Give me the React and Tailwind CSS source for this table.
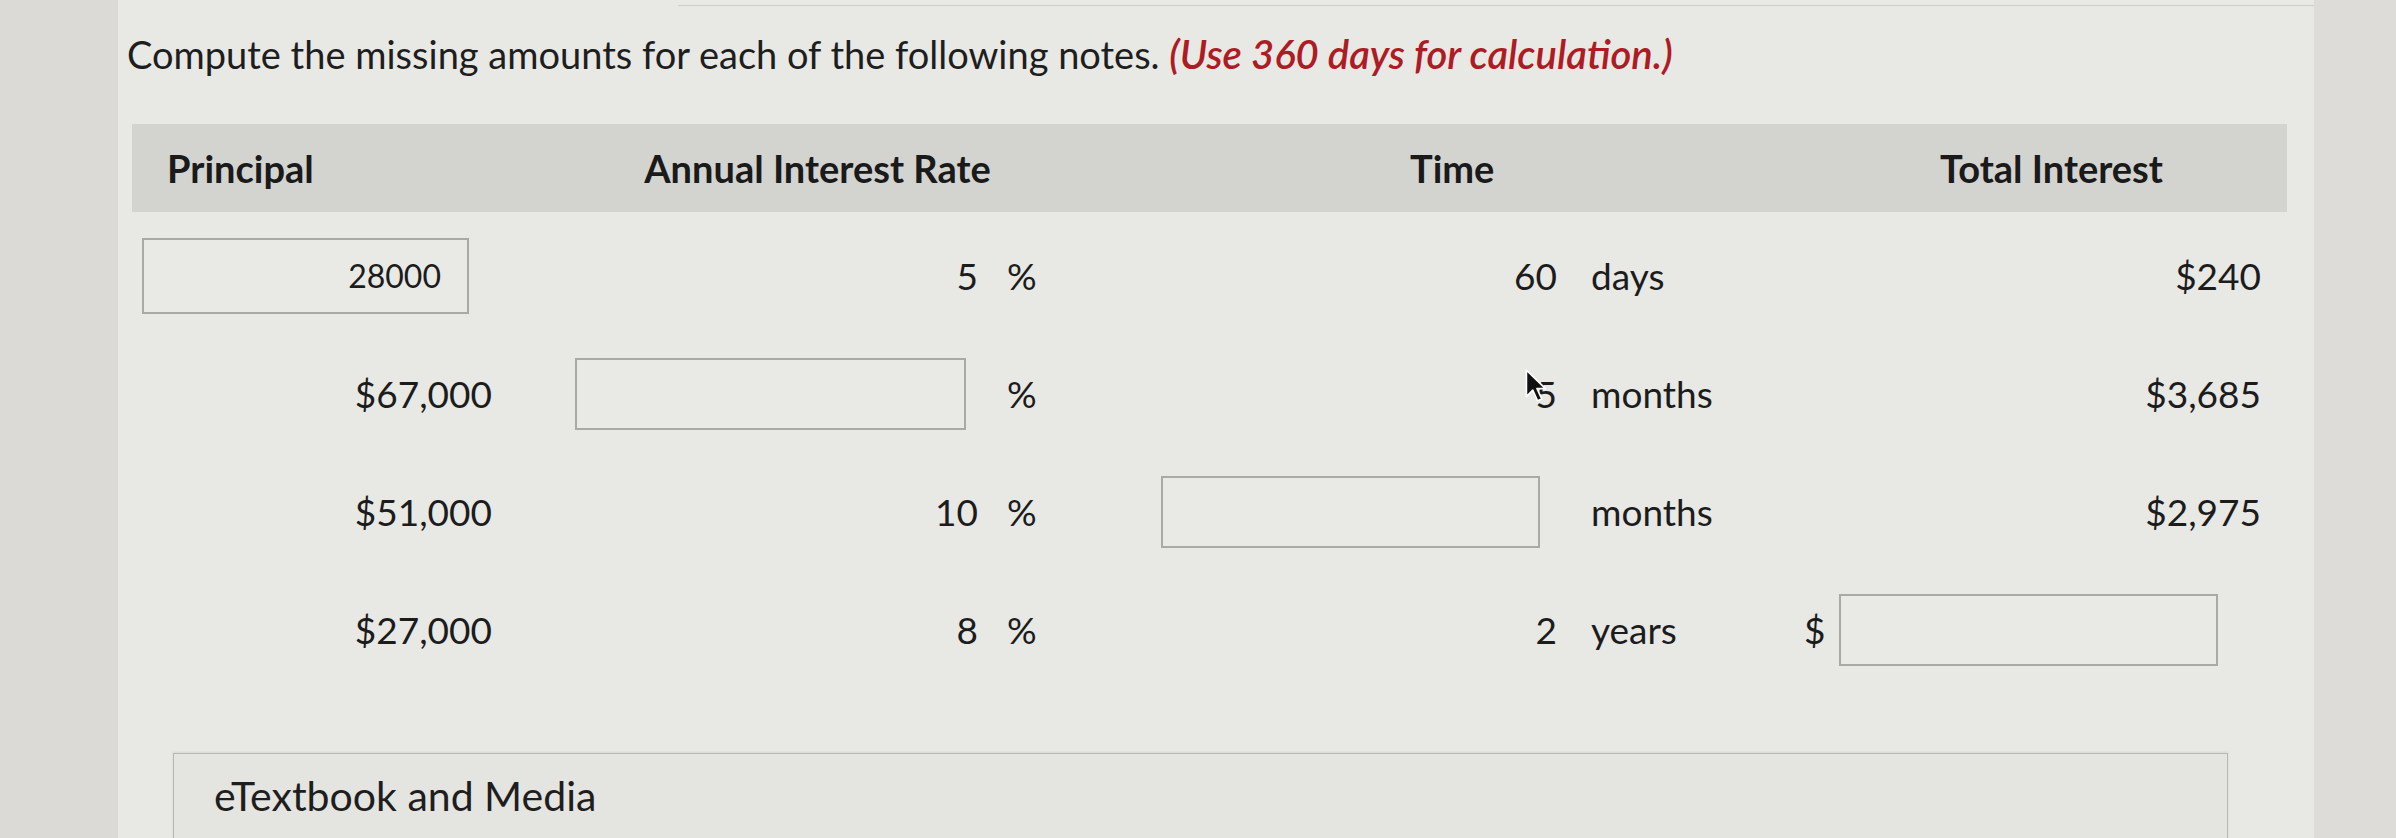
const rows = [
  { principal: "28000", principalInput: true, rate: "5", time: "60", unit: "days", interest: "$240" },
  { principal: "$67,000", rateInput: true, time: "5", unit: "months", interest: "$3,685", cursor: true },
  { principal: "$51,000", rate: "10", timeInput: true, unit: "months", interest: "$2,975" },
  { principal: "$27,000", rate: "8", time: "2", unit: "years", interestInput: true },
];

const boxClass = "h-[72px] border-2 border-[#a9a9a6] bg-[#e9e9e5]";

// black pointer that sits over the "5 months" cell
const Cursor = () => (
  <svg
    className="absolute left-[464px] top-[34px]"
    width="26"
    height="36"
    viewBox="0 0 24 34"
  >
    <path
      d="M2 1 L2 26 L8 20 L12.5 30 L16.5 28.3 L12 18.5 L20 18.5 Z"
      fill="#111"
      stroke="#fff"
      strokeWidth="1.6"
      strokeLinejoin="round"
    />
  </svg>
);

const Row = ({ row }) => (
  <div className="flex h-[118px] items-center text-[37px] text-[#1c1c1c]">
    {/* Principal */}
    <div className="flex w-[438px] items-center">
      {row.principalInput ? (
        <div className="ml-[5px] flex h-[76px] w-[327px] items-center justify-end border-2 border-[#a9a9a6] bg-[#e9e9e5] pr-[26px] text-[32px]">
          {row.principal}
        </div>
      ) : (
        <div className="flex w-[355px] justify-end">{row.principal}</div>
      )}
    </div>

    {/* Annual interest rate */}
    <div className="flex w-[485px] items-center">
      <div className="flex w-[403px] justify-end">
        {row.rateInput ? <div className={`${boxClass} mr-[12px] w-[391px]`} /> : row.rate}
      </div>
      <span className="ml-[29px]">%</span>
    </div>

    {/* Time */}
    <div className="relative flex w-[740px] items-center self-stretch">
      <div className="flex w-[497px] justify-end">
        {row.timeInput ? <div className={`${boxClass} mr-[17px] w-[379px]`} /> : row.time}
      </div>
      <span className="ml-[34px]">{row.unit}</span>
      {row.cursor && <Cursor />}
    </div>

    {/* Total interest */}
    <div className="flex w-[487px] items-center">
      {row.interestInput ? (
        <div className="flex items-center pl-[4px]">
          <span>$</span>
          <div className={`${boxClass} ml-[14px] w-[379px]`} />
        </div>
      ) : (
        <div className="flex w-full justify-end pr-[26px]">{row.interest}</div>
      )}
    </div>
  </div>
);

export default function App() {
  return (
    <div className="flex h-[838px] w-[2396px] overflow-hidden bg-[#dcdbd7] font-['Lato','Noto_Sans',sans-serif]">
      <div className="w-[118px] shrink-0 bg-[#dbdad6]" />

      <main className="w-[2196px] shrink-0 bg-[#e8e8e4]">
        <div className="ml-[560px] mt-[5px] border-t border-[#cfcfcb]" />

        <h1 className="ml-[9px] mt-[25px] text-[38px] leading-[46px] text-[#1e1e1e]">
          Compute the missing amounts for each of the following notes.{" "}
          <span className="text-[40px] font-semibold italic text-[#ad1c24]">(Use 360 days for calculation.)</span>
        </h1>

        <section className="ml-[14px] mt-[47px] w-[2155px]">
          <div className="flex h-[88px] items-center bg-[#d3d3d0] text-[38px] font-bold text-[#1a1a1a]">
            <div className="w-[443px] pl-[35px]">Principal</div>
            <div className="w-[485px] text-center">Annual Interest Rate</div>
            <div className="w-[740px] pl-[350px]">Time</div>
            <div className="w-[487px] pl-[140px]">Total Interest</div>
          </div>

          <div className="ml-[5px] mt-[5px]">
            {rows.map((row, i) => (
              <Row key={i} row={row} />
            ))}
          </div>
        </section>

        <div className="ml-[55px] mt-[64px] h-[120px] w-[2055px] border border-[#b7b7b3] bg-[#e4e4e0] pl-[40px] pt-[18px] text-[41px] leading-[48px] text-[#1e1e1e] shadow-[0_-1px_2px_rgba(0,0,0,0.08)]">
          eTextbook and Media
        </div>
      </main>

      <div className="flex-1 bg-[#dddcd8]" />
    </div>
  );
}
